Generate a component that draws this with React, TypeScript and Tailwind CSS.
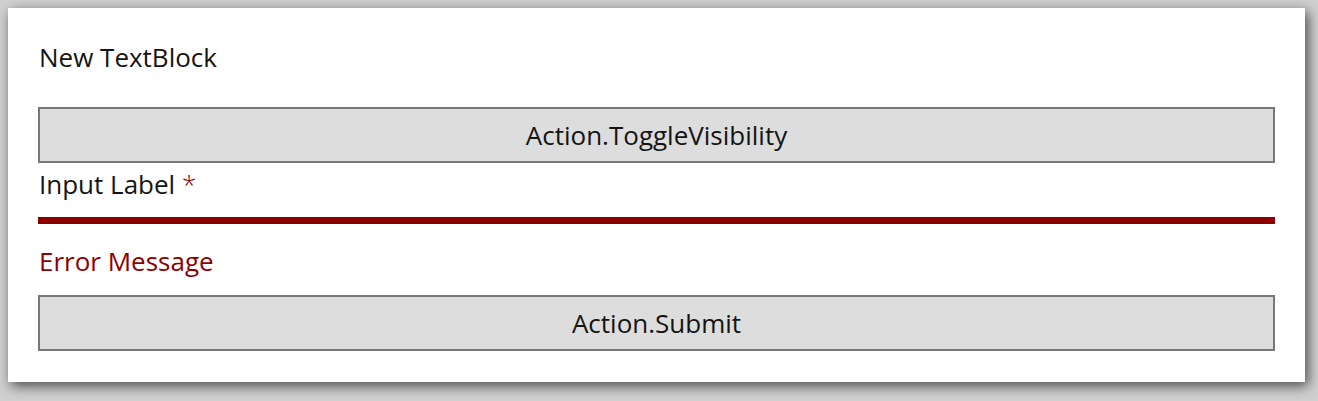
export default function App() {
  return (
    <main className="w-[1318px] h-[401px] bg-[#d0d0d0] pt-[8px] pl-[8px] font-['Open_Sans',sans-serif] text-[26px] text-[#141414] overflow-hidden">
      <div className="w-[1297px] h-[374px] bg-white shadow-[3px_4px_12px_rgba(0,0,0,0.65)] px-[30px] pt-[31px] flex flex-col">
        <p className="leading-[36px] pl-[1px]">New TextBlock</p>

        <button className="mt-[32px] h-[56px] w-full border-2 border-[#777777] bg-[#dddddd] leading-[36px]">
          Action.ToggleVisibility
        </button>

        {/* Input with validation error */}
        <label className="mt-[3px] leading-[36px] pl-[1px]">
          Input Label <span className="text-[#8b0000] font-light">*</span>
        </label>
        <div className="mt-[15px] h-[7px] bg-[#8b0000]" />
        <p className="mt-[19px] leading-[36px] pl-[1px] text-[#8b0000]">Error Message</p>

        <button className="mt-[16px] h-[56px] w-full border-2 border-[#777777] bg-[#dddddd] leading-[36px]">
          Action.Submit
        </button>
      </div>
    </main>
  );
}
